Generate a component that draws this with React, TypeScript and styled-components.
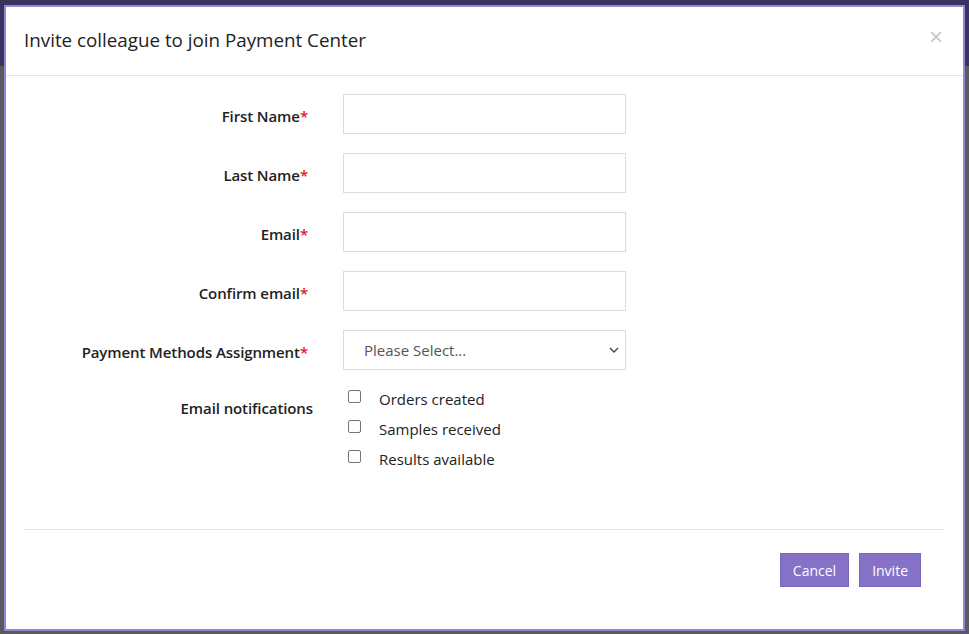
import React from "react";
import styled, { createGlobalStyle } from "styled-components";

const COLORS = {
  PURPLE: "#8572c6",
  BORDER: "#9585d8",
  OVERLAY: "#5b5b5f",
  TOP_BAR: "#3b335e",
  INPUT_BORDER: "#dcdcdc",
  DIVIDER: "#e6e6e6",
  TEXT: "#222",
  RED: "#e8141c",
};

const GlobalStyle = createGlobalStyle`
  html, body {
    margin: 0;
    padding: 0;
    height: 100%;
  }
  body {
    font-family: "Open Sans", "Noto Sans", sans-serif;
    color: ${COLORS.TEXT};
  }
  * {
    box-sizing: border-box;
  }
`;

const Page = styled.div`
  width: 969px;
  height: 634px;
  background: linear-gradient(${COLORS.TOP_BAR} 0 66px, ${COLORS.OVERLAY} 66px);
  padding: 5px 4px 3px 4px;
  overflow: hidden;
`;

const Modal = styled.div`
  width: 961px;
  height: 626px;
  background: #fff;
  border: 2px solid ${COLORS.BORDER};
  display: flex;
  flex-direction: column;
`;

const Header = styled.div`
  height: 69px;
  display: flex;
  align-items: center;
  justify-content: space-between;
  padding: 0 20px 2px 18px;
  border-bottom: 1px solid ${COLORS.DIVIDER};
`;

const Title = styled.h4`
  margin: 0;
  font-size: 18.8px;
  font-weight: 400;
`;

const Close = styled.button`
  border: 0;
  background: none;
  padding: 0;
  font-size: 24px;
  line-height: 1;
  color: #c8c8c8;
  font-family: "Liberation Sans", sans-serif;
  cursor: pointer;
  margin-top: -6px;
`;

const Body = styled.div`
  flex: 1;
  padding: 18px 18px 0 18px;
  display: flex;
  flex-direction: column;
`;

const Form = styled.div`
  display: flex;
  flex-direction: column;
  gap: 19px;
`;

const Row = styled.div`
  display: grid;
  grid-template-columns: 319px 283px;
  align-items: center;
`;

const Label = styled.label<{ $pad?: number }>`
  text-align: right;
  font-size: 15px;
  font-weight: 600;
  padding-right: ${({ $pad }) => $pad ?? 35}px;
  padding-top: 3px;
  letter-spacing: -0.1px;
`;

const Star = styled.span`
  color: ${COLORS.RED};
`;

const Input = styled.input`
  height: 40px;
  width: 283px;
  border: 1px solid ${COLORS.INPUT_BORDER};
  outline: none;
  padding: 0 12px;
  font-size: 15px;
  font-family: inherit;
`;

const SelectBox = styled.div`
  height: 40px;
  width: 283px;
  border: 1px solid ${COLORS.INPUT_BORDER};
  display: flex;
  align-items: center;
  justify-content: space-between;
  padding: 0 5px 0 20px;
  font-size: 15px;
  color: #555;
`;

const CheckRow = styled.div`
  display: grid;
  grid-template-columns: 319px 283px;
  align-items: start;
  margin-top: -1px;
`;

const CheckLabel = styled(Label)`
  padding-top: 10px;
`;

const CheckList = styled.div`
  display: flex;
  flex-direction: column;
  gap: 9px;
`;

const CheckItem = styled.label`
  display: flex;
  align-items: center;
  gap: 18px;
  font-size: 15px;
  padding-left: 5px;
  height: 21px;
`;

const Box = styled.span`
  width: 13px;
  height: 13px;
  border: 1px solid #767676;
  border-radius: 2px;
  margin-top: -4px;
  background: #fff;
`;

const Footer = styled.div`
  margin-top: auto;
  margin-left: 18px;
  margin-right: 19px;
  border-top: 1px solid ${COLORS.DIVIDER};
  height: 100px;
  display: flex;
  justify-content: flex-end;
  align-items: flex-start;
  padding-top: 23px;
  padding-right: 23px;
  gap: 10px;
`;

const Button = styled.button`
  background: ${COLORS.PURPLE};
  color: #fff;
  border: 1px solid #7a66bd;
  height: 34px;
  padding: 0 12px;
  font-size: 14px;
  font-family: inherit;
  cursor: pointer;
`;

const FIELDS = ["First Name", "Last Name", "Email", "Confirm email"];
const NOTIFICATIONS = ["Orders created", "Samples received", "Results available"];

const Chevron = () => (
  <svg width="12" height="12" viewBox="0 0 12 12" fill="none">
    <path d="M2 4l4 4 4-4" stroke="#444" strokeWidth="1.4" />
  </svg>
);

const App = () => (
  <>
    <GlobalStyle />
    <Page>
      <Modal>
        <Header>
          <Title>Invite colleague to join Payment Center</Title>
          <Close aria-label="Close">×</Close>
        </Header>
        <Body>
          <Form>
            {FIELDS.map((field) => (
              <Row key={field}>
                <Label>
                  {field}
                  <Star>*</Star>
                </Label>
                <Input />
              </Row>
            ))}
            <Row>
              <Label>
                Payment Methods Assignment<Star>*</Star>
              </Label>
              <SelectBox>
                Please Select...
                <Chevron />
              </SelectBox>
            </Row>
            <CheckRow>
              <CheckLabel $pad={30}>Email notifications</CheckLabel>
              <CheckList>
                {NOTIFICATIONS.map((item) => (
                  <CheckItem key={item}>
                    <Box />
                    {item}
                  </CheckItem>
                ))}
              </CheckList>
            </CheckRow>
          </Form>
        </Body>
        <Footer>
          <Button>Cancel</Button>
          <Button>Invite</Button>
        </Footer>
      </Modal>
    </Page>
  </>
);

export default App;
